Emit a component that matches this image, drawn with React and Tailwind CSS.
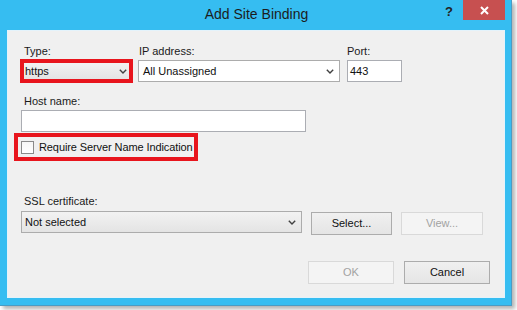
import React from 'react';

const Chevron = () => (
  <svg width="8" height="5" viewBox="0 0 8 5" className="shrink-0">
    <polyline points="0.8,0.8 4,4 7.2,0.8" fill="none" stroke="#404040" strokeWidth="1.4" />
  </svg>
);

const Label = ({ children, className = '' }) => (
  <div className={`h-[15px] leading-[15px] text-[#1a1a1a] ${className}`}>{children}</div>
);

const Button = ({ children, disabled, className = '' }) => (
  <button
    disabled={disabled}
    className={`h-[23px] border flex items-center justify-center ${
      disabled
        ? 'border-[#d9d9d9] bg-[#f4f4f4] text-[#a2a2a2]'
        : 'border-[#acacac] bg-gradient-to-b from-[#f0f0f0] to-[#e5e5e5] text-[#111]'
    } ${className}`}
  >
    {children}
  </button>
);

export default function App() {
  return (
    <div className="w-[517px] h-[310px] bg-white font-['Liberation_Sans',Arial,sans-serif] text-[11px]">
      <div className="w-[512px] h-[306px] bg-[#36bdf1] pl-[7px] pr-[6px] pb-[7px] flex flex-col border-r border-b border-[#4a9cc4] shadow-[3px_3px_4px_rgba(0,0,0,0.3)]">
        {/* title bar */}
        <div className="h-[30px] grid grid-cols-[1fr_auto_1fr] shrink-0">
          <div />
          <div className="pt-[6px] leading-[16px] text-[14px] text-[#1c1c1c] pl-[1px]">Add Site Binding</div>
          <div className="flex justify-end items-start">
            <span className="mt-[4px] mr-[10px] text-[13px] font-bold text-[#222] leading-[16px]">?</span>
            <div className="w-[42px] h-[20px] bg-[#c75050] flex items-center justify-center">
              <svg width="9" height="9" viewBox="0 0 9 9">
                <path d="M1 1 L8 8 M8 1 L1 8" stroke="#fff" strokeWidth="2" />
              </svg>
            </div>
          </div>
        </div>

        {/* client area */}
        <div className="flex-1 bg-[#f0f0f0] border border-[#e4f3fb] pl-[6px] pt-[13px] flex flex-col">
          <div className="flex items-start">
            <div className="ml-[6px]">
              <Label className="pl-[4px]">Type:</Label>
              <div className="w-[113px] h-[24px] border-4 border-[#e8151d] bg-gradient-to-b from-[#f2f2f2] to-[#e4e4e4] flex items-center justify-between pl-[1px] pr-[2px]">
                <span className="text-[#111]">https</span>
                <Chevron />
              </div>
            </div>
            <div className="ml-[5px]">
              <Label className="pl-[1px]">IP address:</Label>
              <div className="mt-[1px] w-[202px] h-[22px] border border-[#acacac] bg-white flex items-center justify-between pl-[4px] pr-[5px]">
                <span className="text-[#111]">All Unassigned</span>
                <Chevron />
              </div>
            </div>
            <div className="ml-[7px]">
              <Label>Port:</Label>
              <div className="mt-[1px] w-[55px] h-[22px] border border-[#abadb3] bg-white flex items-center pl-[2px] text-[#111]">
                443
              </div>
            </div>
          </div>

          <div className="ml-[7px] mt-[11px]">
            <Label className="pl-[3px]">Host name:</Label>
            <div className="mt-[1px] w-[285px] h-[22px] border border-[#abadb3] bg-white" />
          </div>

          <div className="mt-[1px] w-[184px] h-[28px] border-4 border-[#e8151d] flex items-center pl-[3px]">
            <div className="w-[13px] h-[13px] border border-[#8a8a8a] bg-gradient-to-b from-[#f6f6f6] to-[#ffffff] shrink-0" />
            <span className="ml-[5px] whitespace-nowrap tracking-[-0.1px] text-[#111]">Require Server Name Indication</span>
          </div>

          <div className="ml-[7px] mt-[33px]">
            <Label className="pl-[3px]">SSL certificate:</Label>
            <div className="mt-[2px] flex items-start">
              <div className="w-[281px] h-[22px] border border-[#acacac] bg-gradient-to-b from-[#f2f2f2] to-[#e4e4e4] flex items-center justify-between pl-[3px] pr-[5px]">
                <span className="text-[#111]">Not selected</span>
                <Chevron />
              </div>
              <Button className="ml-[9px] mt-[1px] w-[81px]">Select...</Button>
              <Button disabled className="ml-[9px] mt-[1px] w-[82px]">View...</Button>
            </div>
          </div>

          <div className="mt-[26px] flex justify-end pr-[14px]">
            <Button disabled className="w-[86px]">OK</Button>
            <Button className="ml-[10px] w-[86px]">Cancel</Button>
          </div>
        </div>
      </div>
    </div>
  );
}
